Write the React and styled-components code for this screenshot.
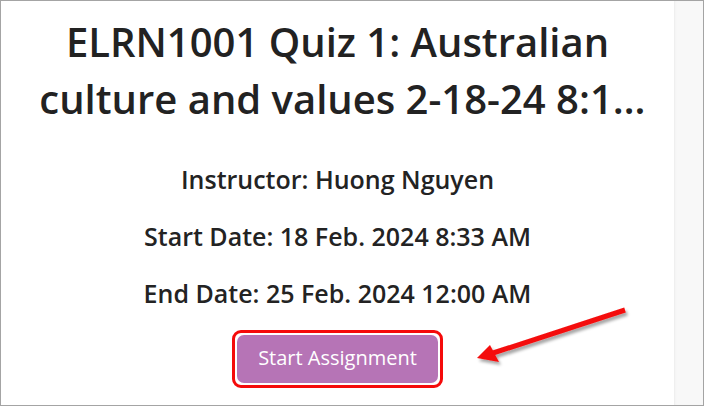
import React from "react";
import styled, { createGlobalStyle } from "styled-components";

const GlobalStyle = createGlobalStyle`
  html, body {
    margin: 0;
    padding: 0;
    background: #ffffff;
  }
  body {
    font-family: "Open Sans", "Liberation Sans", sans-serif;
  }
`;

const Frame = styled.div`
  position: relative;
  box-sizing: border-box;
  width: 704px;
  height: 406px;
  border: 1px solid #a4a4a4;
  display: flex;
  overflow: hidden;
  background: #ffffff;
`;

const Main = styled.main`
  flex: 1;
  display: flex;
  flex-direction: column;
  align-items: center;
  padding-top: 12px;
`;

const SideStrip = styled.aside`
  width: 29px;
  background: #f8f8f8;
  box-shadow: inset 2px 0 2px -1px #ececec;
`;

const Title = styled.h1`
  margin: 0;
  width: 612px;
  font-size: 40px;
  line-height: 57px;
  font-weight: 600;
  color: #222222;
  text-align: center;
  display: -webkit-box;
  -webkit-box-orient: vertical;
  -webkit-line-clamp: 2;
  overflow: hidden;
`;

const Details = styled.div`
  margin-top: 37px;
  display: flex;
  flex-direction: column;
  align-items: center;
  gap: 27px;
`;

const DetailLine = styled.p`
  margin: 0;
  font-size: 25px;
  line-height: 30px;
  font-weight: 600;
  color: #232323;
`;

const Highlight = styled.div`
  margin-top: 22px;
  padding: 2px;
  border: 3px solid #f50a0a;
  border-radius: 9px;
  display: flex;
`;

const StartButton = styled.button`
  width: 201px;
  height: 48px;
  border: none;
  border-radius: 7px;
  background: #b674b6;
  color: #ffffff;
  font-family: "Open Sans", "Liberation Sans", sans-serif;
  font-size: 20px;
  font-weight: 400;
  padding: 0 0 3px;
  cursor: pointer;
`;

const Annotation = styled.svg`
  position: absolute;
  left: 0;
  top: 0;
  pointer-events: none;
`;

const Arrow = () => (
  <Annotation width="704" height="406" viewBox="0 0 704 406">
    <defs>
      <filter id="arrowShadow" x="-20%" y="-50%" width="140%" height="200%">
        <feDropShadow dx="2" dy="3" stdDeviation="1.6" floodColor="#000" floodOpacity="0.35" />
      </filter>
    </defs>
    <g filter="url(#arrowShadow)">
      <line x1="624" y1="309" x2="486" y2="354" stroke="#f40d0d" strokeWidth="5" />
      <polygon points="476,357 489,344 498,361" fill="#f40d0d" />
    </g>
  </Annotation>
);

const App = () => {
  return (
    <>
      <GlobalStyle />
      <Frame>
        <Main>
          <Title>ELRN1001 Quiz 1: Australian culture and values 2-18-24 8:15 AM</Title>
          <Details>
            <DetailLine>Instructor: Huong Nguyen</DetailLine>
            <DetailLine>Start Date: 18 Feb. 2024 8:33 AM</DetailLine>
            <DetailLine>End Date: 25 Feb. 2024 12:00 AM</DetailLine>
          </Details>
          <Highlight>
            <StartButton>Start Assignment</StartButton>
          </Highlight>
        </Main>
        <SideStrip />
        <Arrow />
      </Frame>
    </>
  );
};

export default App;
